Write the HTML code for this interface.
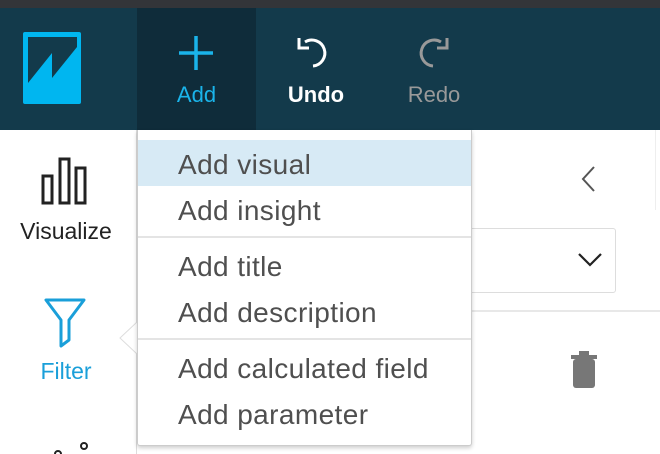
<!DOCTYPE html><html><head><style>
body{margin:0;width:660px;height:454px;overflow:hidden;background:#fff;font-family:"Liberation Sans",sans-serif;position:relative}
.a{position:absolute}
.mi{position:absolute;left:178px;font-size:28px;color:#4f4f4f;line-height:30px;letter-spacing:0.4px}
</style></head><body>
<div class="a" style="left:0;top:0;width:660px;height:8px;background:#333539"></div>
<div class="a" style="left:0;top:8px;width:660px;height:122px;background:#133a4b"></div>
<div class="a" style="left:137px;top:8px;width:119px;height:122px;background:#0f2c3a"></div>
<svg class="a" style="left:23px;top:32px" width="58" height="72" viewBox="0 0 58 72"><rect width="58" height="72" rx="2" fill="#00b6f0"/><path d="M5 5H54V15L29 46V21L5 51Z" fill="#133a4b"/></svg>
<svg class="a" style="left:176px;top:34px" width="40" height="40"><path d="M20 2V36M3 19H37" stroke="#1ab4ea" stroke-width="3.5"/></svg>
<div class="a" style="left:137px;top:82px;width:119px;text-align:center;color:#1ab4ea;font-size:22px">Add</div>
<svg class="a" style="left:296px;top:34px" width="40" height="36"><path d="M9 8A13 13 0 1 1 17 32" stroke="#fff" stroke-width="3" fill="none"/><path d="M3 4V14H13" stroke="#fff" stroke-width="3" fill="none"/></svg>
<div class="a" style="left:276px;top:82px;width:80px;text-align:center;color:#fff;font-size:22px;font-weight:bold">Undo</div>
<svg class="a" style="left:412px;top:34px" width="40" height="36"><path d="M29 8A13 13 0 1 0 21 32" stroke="#999" stroke-width="3" fill="none"/><path d="M35 4V14H25" stroke="#999" stroke-width="3" fill="none"/></svg>
<div class="a" style="left:394px;top:82px;width:80px;text-align:center;color:#999;font-size:22px">Redo</div>
<div class="a" style="left:136px;top:130px;width:1px;height:324px;background:#ddd"></div>
<svg class="a" style="left:40px;top:156px" width="52" height="52"><g fill="none" stroke="#222" stroke-width="3"><rect x="3" y="20" width="9" height="27"/><rect x="20" y="3" width="9" height="44"/><rect x="36" y="12" width="9" height="35"/></g></svg>
<div class="a" style="left:0;top:218px;width:132px;text-align:center;font-size:23px;color:#222">Visualize</div>
<svg class="a" style="left:42px;top:296px" width="46" height="52"><path d="M4 4H42L27 24V44L19 50V24Z" fill="none" stroke="#1a9fd9" stroke-width="3" stroke-linejoin="round"/></svg>
<div class="a" style="left:0;top:358px;width:132px;text-align:center;font-size:23px;color:#1a9fd9">Filter</div>
<svg class="a" style="left:118px;top:322px" width="20" height="32"><path d="M19 0L2 16L19 32" fill="#fff" stroke="#ddd"/></svg>
<svg class="a" style="left:50px;top:440px" width="40" height="14"><circle cx="8" cy="14" r="3" fill="none" stroke="#222" stroke-width="2"/><circle cx="34" cy="6" r="3" fill="none" stroke="#222" stroke-width="2"/></svg>
<svg class="a" style="left:578px;top:164px" width="20" height="30"><path d="M16 3L5 15L16 27" fill="none" stroke="#555" stroke-width="2"/></svg>
<div class="a" style="left:655px;top:130px;width:1px;height:80px;background:#eee"></div>
<div class="a" style="left:460px;top:228px;width:154px;height:63px;border:1px solid #ddd;border-radius:3px"></div>
<svg class="a" style="left:576px;top:250px" width="30" height="20"><path d="M3 4L14 15L25 4" fill="none" stroke="#222" stroke-width="2.2"/></svg>
<div class="a" style="left:471px;top:310px;width:189px;height:2px;background:#e8e8e8"></div>
<svg class="a" style="left:570px;top:350px" width="32" height="40"><rect x="1" y="5" width="26" height="4" fill="#777"/><rect x="9" y="1" width="10" height="5" fill="#777"/><rect x="3" y="9" width="22" height="29" rx="3" fill="#777"/></svg>
<div class="a" style="left:137px;top:130px;width:333px;height:315px;background:#fff;border:1px solid #ccc;border-top:none;border-radius:0 0 3px 3px;box-shadow:0 2px 4px rgba(0,0,0,.2)">
<div class="a" style="left:0;top:10px;width:333px;height:46px;background:#d7eaf5"></div>
<div class="a" style="left:0;top:106px;width:333px;height:2px;background:#e4e4e4"></div>
<div class="a" style="left:0;top:208px;width:333px;height:2px;background:#e4e4e4"></div>
</div>
<div class="mi" style="top:150px">Add visual</div>
<div class="mi" style="top:196px">Add insight</div>
<div class="mi" style="top:252px">Add title</div>
<div class="mi" style="top:298px">Add description</div>
<div class="mi" style="top:354px">Add calculated field</div>
<div class="mi" style="top:400px">Add parameter</div>
</body></html>
